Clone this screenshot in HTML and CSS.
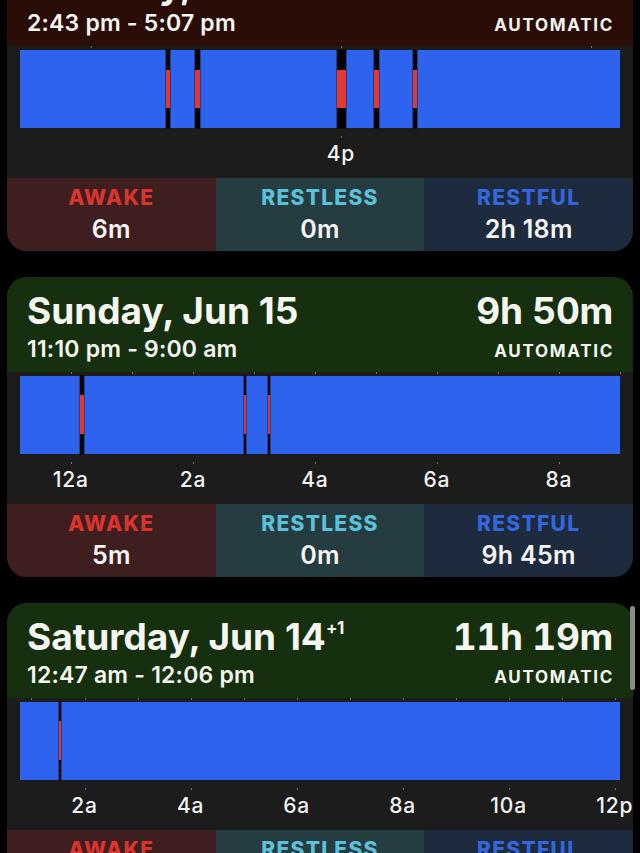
FILE: index.html
```html
<!DOCTYPE html>
<html lang="en">
<head>
    <meta charset="UTF-8">
    <meta name="viewport" content="width=device-width, initial-scale=1.0">
    <title>Sleep History</title>
    <link rel="stylesheet" href="styles.css">
</head>
<body>
    <div class="feed">
        <section class="card nap" data-start="14:43" data-end="17:07" data-awake="35,1.1;42,1.1;76.1,2.1;85,1.1;94.2,1.1">
            <header class="card-head">
                <div class="row">
                    <h2 class="day">Tuesday, Jun 17</h2>
                    <span class="total">2h 24m</span>
                </div>
                <div class="row sub">
                    <span class="range">2:43 pm - 5:07 pm</span>
                    <span class="source">AUTOMATIC</span>
                </div>
            </header>
            <div class="chart">
                <div class="ticks"></div>
                <div class="bar"></div>
                <div class="axis"></div>
            </div>
            <div class="stats">
                <div class="stat awake"><span class="label">AWAKE</span><span class="value">6m</span></div>
                <div class="stat restless"><span class="label">RESTLESS</span><span class="value">0m</span></div>
                <div class="stat restful"><span class="label">RESTFUL</span><span class="value">2h 18m</span></div>
            </div>
        </section>

        <section class="card" data-start="23:10" data-end="9:00" data-awake="59.4,3.2;220.4,2.2;244,2.2">
            <header class="card-head">
                <div class="row">
                    <h2 class="day">Sunday, Jun 15</h2>
                    <span class="total">9h 50m</span>
                </div>
                <div class="row sub">
                    <span class="range">11:10 pm - 9:00 am</span>
                    <span class="source">AUTOMATIC</span>
                </div>
            </header>
            <div class="chart">
                <div class="ticks"></div>
                <div class="bar"></div>
                <div class="axis"></div>
            </div>
            <div class="stats">
                <div class="stat awake"><span class="label">AWAKE</span><span class="value">5m</span></div>
                <div class="stat restless"><span class="label">RESTLESS</span><span class="value">0m</span></div>
                <div class="stat restful"><span class="label">RESTFUL</span><span class="value">9h 45m</span></div>
            </div>
        </section>

        <section class="card" data-start="0:47" data-end="12:06" data-awake="43.9,2.8">
            <header class="card-head">
                <div class="row">
                    <h2 class="day">Saturday, Jun 14<sup>+1</sup></h2>
                    <span class="total">11h 19m</span>
                </div>
                <div class="row sub">
                    <span class="range">12:47 am - 12:06 pm</span>
                    <span class="source">AUTOMATIC</span>
                </div>
            </header>
            <div class="chart">
                <div class="ticks"></div>
                <div class="bar"></div>
                <div class="axis"></div>
            </div>
            <div class="stats">
                <div class="stat awake"><span class="label">AWAKE</span><span class="value">3m</span></div>
                <div class="stat restless"><span class="label">RESTLESS</span><span class="value">0m</span></div>
                <div class="stat restful"><span class="label">RESTFUL</span><span class="value">11h 16m</span></div>
            </div>
        </section>
    </div>

    <div class="scroll-thumb"></div>

    <script src="script.js"></script>
</body>
</html>
```

FILE: styles.css
```css
body {
    margin: 0;
    background: #000;
    color: #f4f6ef;
    font-family: Inter, "Noto Sans", sans-serif;
    height: 100vh;
    overflow: hidden;
}
.feed {
    display: flex;
    flex-direction: column;
    gap: 26px;
    padding: 0 7px;
    margin-top: -49px;
}
.card {
    border-radius: 20px;
    overflow: hidden;
    background: #1c1c1c;
}
.card-head {
    padding: 14px 20px 10px;
    background: #16300f;
}
.nap .card-head {
    background: #2b0d07;
}
.row {
    display: flex;
    justify-content: space-between;
    align-items: baseline;
}
.row.sub {
    margin-top: 5px;
}
.day,
.total {
    margin: 0;
    font-size: 37px;
    font-weight: 700;
    line-height: 40px;
}
.total {
    font-variant-numeric: tabular-nums;
    letter-spacing: -0.3px;
}
.day sup {
    font-size: 17px;
    line-height: 0;
    vertical-align: 16px;
    letter-spacing: -0.5px;
}
.range {
    font-size: 23px;
    font-weight: 600;
    line-height: 26px;
    letter-spacing: 0.2px;
}
.source {
    font-size: 17px;
    font-weight: 700;
    letter-spacing: 1.7px;
    margin-right: -1px;
}

/* timeline */
.chart {
    padding: 0 13px;
}
.ticks {
    position: relative;
    height: 4px;
}
.tick {
    position: absolute;
    top: 0;
    width: 1px;
    height: 2px;
    background: #6e6e6e;
}
.bar {
    position: relative;
    height: 78px;
    background: #2e63ee;
}
.mark {
    position: absolute;
    top: 0;
    bottom: 0;
    min-width: 2px;
    background: linear-gradient(#000 25%, #e4382e 25%, #e4382e 75%, #000 75%);
    box-shadow: 0 0 0 0.5px rgba(0, 0, 0, 0.7);
}
.axis {
    position: relative;
    height: 50px;
}
.axis .tick {
    top: 8px;
}
.hour {
    position: absolute;
    top: 14px;
    transform: translateX(-50%);
    font-size: 21px;
    font-weight: 500;
    line-height: 24px;
    letter-spacing: 0.8px;
    color: #f2f2f2;
}

/* totals */
.stats {
    display: grid;
    grid-template-columns: repeat(3, 1fr);
}
.stat {
    display: flex;
    flex-direction: column;
    align-items: center;
    padding: 8px 0;
}
.label {
    font-size: 21px;
    font-weight: 800;
    line-height: 24px;
    letter-spacing: 1.3px;
}
.value {
    margin-top: 5px;
    font-size: 25px;
    font-weight: 600;
    line-height: 28px;
    letter-spacing: 0.3px;
    color: #f4f4f4;
}
.awake {
    background: #3e1e1e;
}
.awake .label {
    color: #d8352f;
}
.restless {
    background: #253c40;
}
.restless .label {
    color: #5bc0d8;
}
.restful {
    background: #1e2a3e;
}
.restful .label {
    color: #3466dc;
}

.scroll-thumb {
    position: fixed;
    top: 606px;
    right: 5px;
    width: 5px;
    height: 84px;
    border-radius: 3px;
    background: #8a8a8a;
}
```

FILE: script.js
```js
// Build the hour ticks, labels and awake marks for each sleep card
function toMinutes(str) {
    const [h, m] = str.split(':').map(Number);
    return h * 60 + m;
}

function hourLabel(hour) {
    const h = hour % 24;
    return (h % 12 || 12) + (h < 12 ? 'a' : 'p');
}

document.querySelectorAll('.card').forEach(card => {
    const start = toMinutes(card.dataset.start);
    let end = toMinutes(card.dataset.end);
    if (end <= start) end += 1440;
    const span = end - start;
    const pct = min => (min / span * 100) + '%';

    const ticks = card.querySelector('.ticks');
    const axis = card.querySelector('.axis');
    const bar = card.querySelector('.bar');

    for (let t = Math.ceil(start / 60) * 60; t <= end; t += 60) {
        const top = document.createElement('div');
        top.className = 'tick';
        top.style.left = pct(t - start);
        ticks.appendChild(top);

        const hour = t / 60;
        if (hour % 2 === 0) {
            const dot = document.createElement('div');
            dot.className = 'tick';
            dot.style.left = pct(t - start);
            axis.appendChild(dot);

            const label = document.createElement('span');
            label.className = 'hour';
            label.style.left = pct(t - start);
            label.textContent = hourLabel(hour);
            axis.appendChild(label);
        }
    }

    card.dataset.awake.split(';').forEach(pair => {
        const [at, len] = pair.split(',').map(Number);
        const mark = document.createElement('div');
        mark.className = 'mark';
        mark.style.left = pct(at);
        mark.style.width = pct(len);
        bar.appendChild(mark);
    });
});
```
